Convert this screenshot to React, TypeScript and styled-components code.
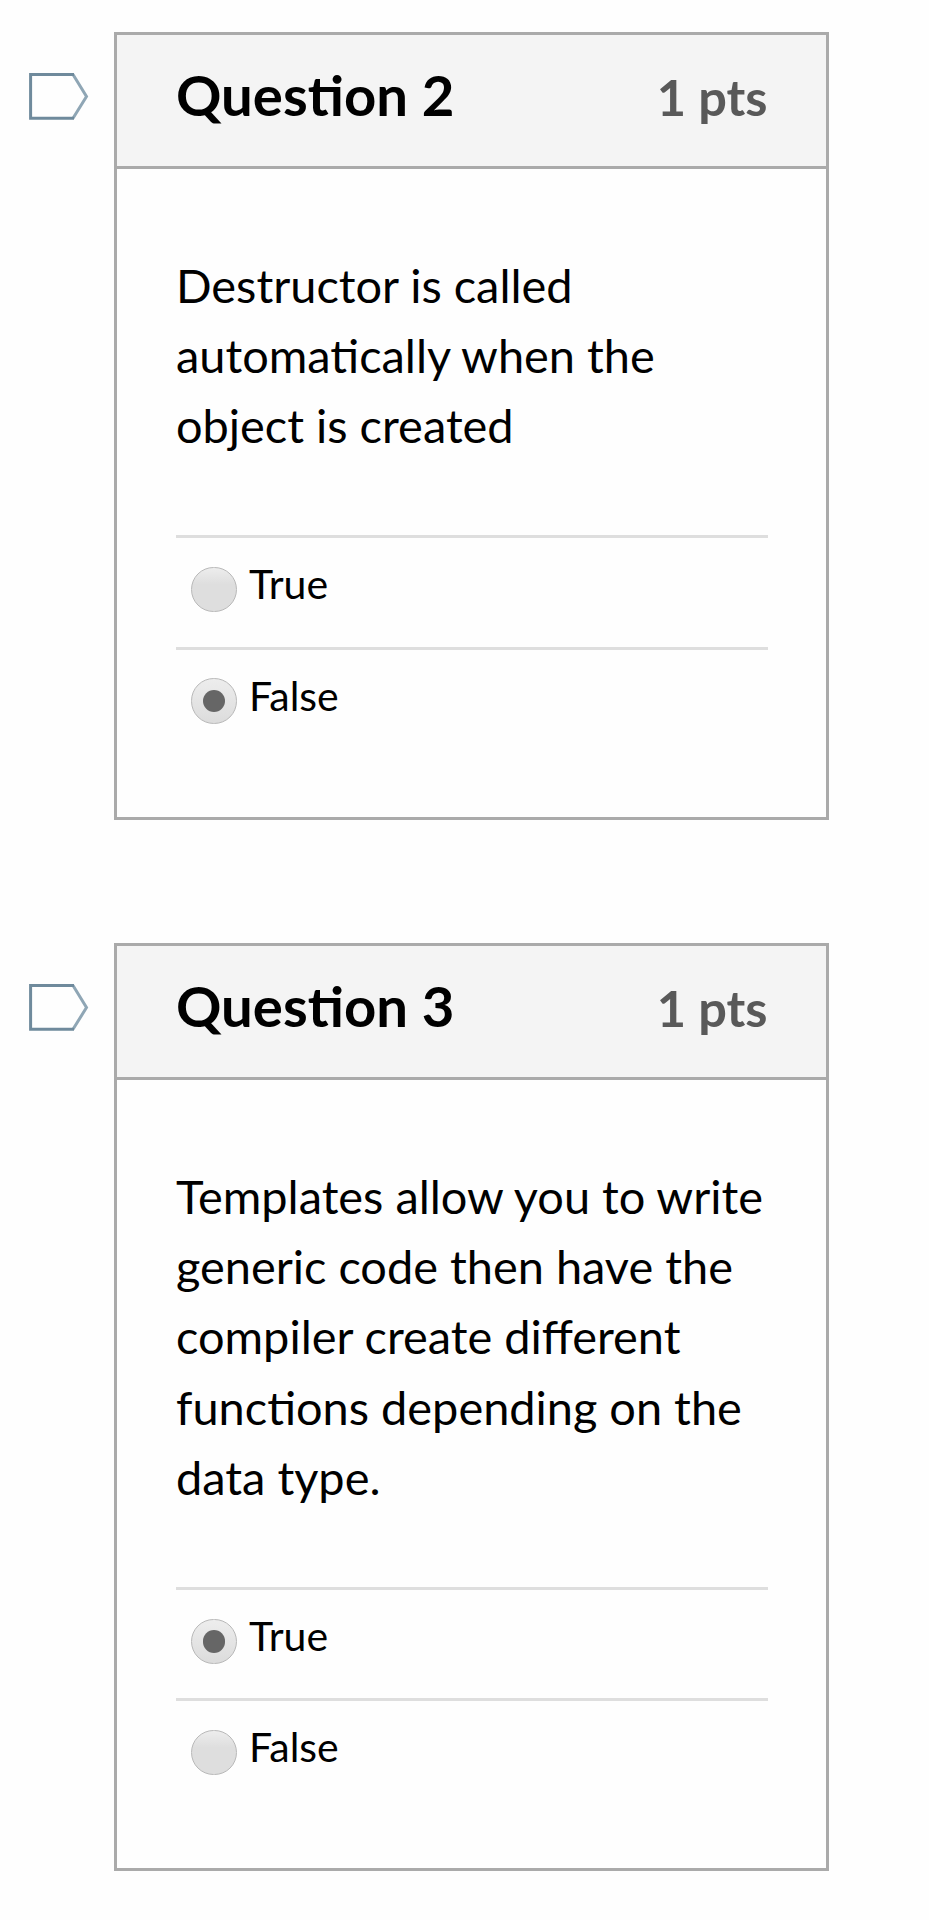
import React, { useState } from "react";
import styled, { createGlobalStyle } from "styled-components";

const GlobalStyle = createGlobalStyle`
  * { box-sizing: border-box; }
  body {
    margin: 0;
    background: #fefefe;
    color: #000;
    font-family: Lato, sans-serif;
  }
`;

const Page = styled.main`
  display: flex;
  flex-direction: column;
  gap: 123px;
  width: 829px;
  padding: 32px 0 49px;
`;

const QuestionRow = styled.section`
  display: flex;
  align-items: flex-start;
`;

const FlagButton = styled.button`
  flex: none;
  width: 114px;
  padding: 40px 0 0 28px;
  border: 0;
  background: none;
  text-align: left;
  line-height: 0;
`;

const Card = styled.article<{ $height: number }>`
  flex: 1;
  height: ${(p) => p.$height}px;
  border: 3px solid #aaa;
  background: #fefefe;
`;

const CardHeader = styled.header`
  display: flex;
  justify-content: space-between;
  align-items: baseline;
  height: 134px;
  padding: 25px 58.5px 0 59px;
  border-bottom: 3px solid #aaa;
  background: #f4f4f4;
`;

const Title = styled.h2`
  margin: 0;
  font-size: 56.3px;
  line-height: 68px;
  font-weight: 700;
`;

const Points = styled.span`
  color: #595959;
  font-size: 50.5px;
  line-height: 60px;
  font-weight: 700;
`;

const CardBody = styled.div`
  padding: 80.6px 58.5px 0 59px;
`;

const Prompt = styled.p`
  margin: 0 0 74.4px;
  font-size: 46.9px;
  line-height: 70.4px;
  white-space: nowrap;
`;

const Answer = styled.label`
  display: flex;
  align-items: flex-start;
  height: 111.3px;
  padding: 21.1px 0 0 15px;
  border-top: 3px solid #dedede;
`;

const AnswerText = styled.span`
  margin-left: 12.5px;
  font-size: 41px;
  line-height: 50px;
`;

const Radio = styled.input`
  appearance: none;
  flex: none;
  display: grid;
  place-items: center;
  width: 45.5px;
  height: 45.5px;
  margin: 7.5px 0 0;
  border: 1px solid #b8b8b8;
  border-radius: 50%;
  background: linear-gradient(#ededed, #dedede 38%, #dedede);

  &:checked {
    background: linear-gradient(#ededed, #dcdcdc);
  }

  &:checked::before {
    content: "";
    width: 22.5px;
    height: 22.5px;
    border-radius: 50%;
    background: #666;
  }
`;

function Flag() {
  return (
    <svg width="62" height="48" viewBox="0 0 62 48" fill="none">
      <path d="M45 2.5L58.5 24.5L45 46.3" stroke="#8fa6b5" strokeWidth="3" />
      <path d="M46 2.5H2.6V46.3H46" stroke="#6f8a9c" strokeWidth="3" />
    </svg>
  );
}

type QuestionData = {
  number: number;
  height: number;
  lines: string[];
  answer: string;
};

const questions: QuestionData[] = [
  {
    number: 2,
    height: 788,
    lines: ["Destructor is called", "automatically when the", "object is created"],
    answer: "False",
  },
  {
    number: 3,
    height: 928,
    lines: [
      "Templates allow you to write",
      "generic code then have the",
      "compiler create different",
      "functions depending on the",
      "data type.",
    ],
    answer: "True",
  },
];

function Question({ number, height, lines, answer }: QuestionData) {
  const [selected, setSelected] = useState(answer);
  return (
    <QuestionRow>
      <FlagButton aria-label={`Flag question ${number}`}>
        <Flag />
      </FlagButton>
      <Card $height={height}>
        <CardHeader>
          <Title>Question {number}</Title>
          <Points>1 pts</Points>
        </CardHeader>
        <CardBody>
          <Prompt>
            {lines.map((line, i) => (
              <React.Fragment key={line}>
                {i > 0 && <br />}
                {line}
              </React.Fragment>
            ))}
          </Prompt>
          {["True", "False"].map((option) => (
            <Answer key={option}>
              <Radio
                type="radio"
                name={`question-${number}`}
                checked={selected === option}
                onChange={() => setSelected(option)}
              />
              <AnswerText>{option}</AnswerText>
            </Answer>
          ))}
        </CardBody>
      </Card>
    </QuestionRow>
  );
}

export default function App() {
  return (
    <>
      <GlobalStyle />
      <Page>
        {questions.map((q) => (
          <Question key={q.number} {...q} />
        ))}
      </Page>
    </>
  );
}
